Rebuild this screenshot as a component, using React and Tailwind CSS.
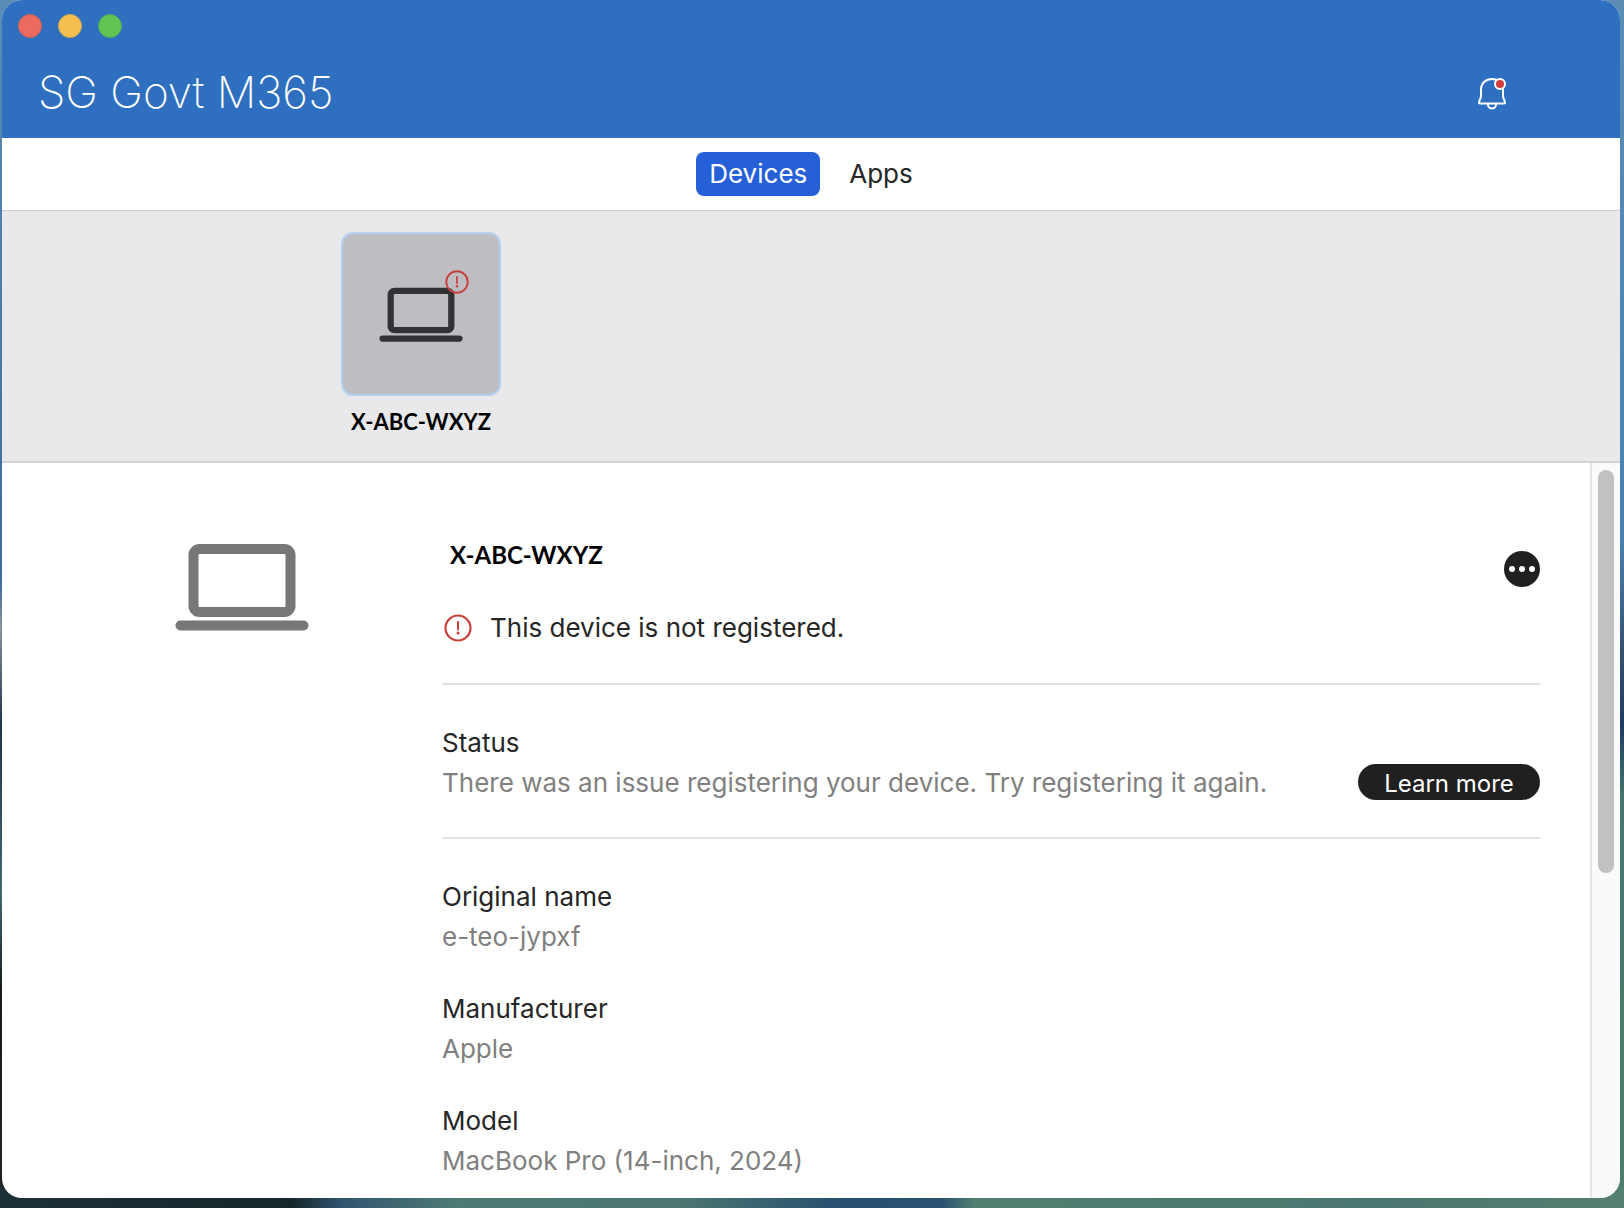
import React from "react";

const device = {
  name: "X-ABC-WXYZ",
  details: [
    { label: "Original name", value: "e-teo-jypxf" },
    { label: "Manufacturer", value: "Apple" },
    { label: "Model", value: "MacBook Pro (14-inch, 2024)" },
  ],
};

const LaptopIcon = ({ className }) => (
  <svg viewBox="0 0 134 88" fill="none" className={className} aria-hidden="true">
    <rect x="18.500" y="6" width="97" height="63" rx="6" stroke="currentColor" strokeWidth="10" />
    <rect x="0.500" y="77.500" width="133" height="10" rx="5" fill="currentColor" />
  </svg>
);

const AlertIcon = ({ className }) => (
  <svg viewBox="0 0 28 28" fill="none" className={className} aria-hidden="true">
    <circle cx="14" cy="14" r="12.500" stroke="currentColor" strokeWidth="2.200" />
    <path d="M14 8V15.500" stroke="currentColor" strokeWidth="2" strokeLinecap="round" />
    <circle cx="14" cy="19" r="1.500" fill="currentColor" />
  </svg>
);

const BellIcon = () => (
  <svg viewBox="0 0 30 34" fill="none" className="w-[30px] h-[34px]" aria-hidden="true">
    <path
      d="M15 2C8.500 2 4 6.500 4 12.500V19C4 21.500 2 23.500 2 25.500Q2 26.500 3 26.500H27Q28 26.500 28 25.500C28 23.500 26 21.500 26 19V12.500C26 6.500 21.500 2 15 2Z"
      stroke="white"
      strokeWidth="2"
      strokeLinejoin="round"
    />
    <path d="M10.800 27C11 29.800 12.800 31.500 15 31.500S19 29.800 19.200 27" stroke="white" strokeWidth="2" />
    <circle cx="23" cy="7" r="5" fill="#d03a3a" stroke="white" strokeWidth="2" />
  </svg>
);

const Header = () => (
  <header className="bg-[#2f6fc0] h-[138px] shrink-0 pt-[14px]">
    <div className="flex gap-4 px-4">
      <button aria-label="Close" className="size-6 rounded-full bg-[#ec6a5e] border border-[#c9635f]" />
      <button aria-label="Minimize" className="size-6 rounded-full bg-[#f4bf4f] border border-[#cfa955]" />
      <button aria-label="Zoom" className="size-6 rounded-full bg-[#61c554] border border-[#4fa962]" />
    </div>
    <div className="flex items-center justify-between pl-9 pr-[113px] pt-6">
      <h1 className="text-white text-[44px] leading-[60px] font-extralight">SG Govt M365</h1>
      <button aria-label="Notifications" className="pt-1">
        <BellIcon />
      </button>
    </div>
  </header>
);

const Tabs = () => (
  <nav className="flex justify-center gap-4 py-[14px] shrink-0 bg-white border-b border-[#cfcfd1] text-[26px] leading-[44px]">
    <button className="px-[13px] rounded-lg bg-[#2560d9] text-white">Devices</button>
    <button className="px-[13px] rounded-lg text-[#262626]">Apps</button>
  </nav>
);

const DeviceStrip = () => (
  <section className="shrink-0 h-[252px] bg-[#e9e9eb] border-b-2 border-[#d3d3d5] pt-[21px] pl-[339px]">
    <button className="flex flex-col items-center w-40">
      <span className="relative flex items-center justify-center w-full h-[164px] rounded-xl bg-[#bebdc2] border-2 border-[#b5d0f2]">
        <LaptopIcon className="w-[84px] h-[55px] text-[#323234]" />
        <AlertIcon className="absolute top-9 right-[30px] size-6 text-[#c9403a]" />
      </span>
      <span className="font-['Lato',sans-serif] font-bold text-[22px] leading-[52px] text-black">{device.name}</span>
    </button>
  </section>
);

const Detail = ({ label, value }) => (
  <div className="leading-10">
    <dt className="text-[#262626]">{label}</dt>
    <dd className="text-[#808080]">{value}</dd>
  </div>
);

const DeviceDetails = () => (
  <main className="flex flex-1 min-w-0 text-[26px] leading-10">
    <div className="w-[440px] shrink-0 pt-20">
      <LaptopIcon className="w-[134px] h-[88px] ml-[173px] text-[#777777]" />
    </div>
    <div className="flex-1 min-w-0 pr-[50px] pt-[72px]">
      <div className="flex items-start justify-between pb-[33px]">
        <h2 className="pl-2 font-['Lato',sans-serif] font-bold text-2xl leading-10 text-black">{device.name}</h2>
        <button aria-label="More options" className="mt-4 -mb-3 size-9 rounded-full bg-[#202020] flex items-center justify-center gap-1">
          <span className="size-[6px] rounded-full bg-white" />
          <span className="size-[6px] rounded-full bg-white" />
          <span className="size-[6px] rounded-full bg-white" />
        </button>
      </div>
      <div className="flex items-center gap-[18px] pb-[35px] text-[#262626] border-b-2 border-[#e2e2e2]">
        <AlertIcon className="size-7 ml-[2px] text-[#c9403a]" />
        <p>This device is not registered.</p>
      </div>
      <div className="flex items-end justify-between pt-[38px] pb-[34px] border-b-2 border-[#e2e2e2]">
        <div>
          <h3 className="text-[#262626]">Status</h3>
          <p className="text-[#808080]">There was an issue registering your device. Try registering it again.</p>
        </div>
        <button className="mb-[3px] h-9 w-[182px] pt-[2px] rounded-full bg-[#202020] text-white text-2xl leading-9">Learn more</button>
      </div>
      <dl className="flex flex-col gap-8 pt-[38px]">
        {device.details.map((item) => (
          <Detail key={item.label} label={item.label} value={item.value} />
        ))}
      </dl>
    </div>
  </main>
);

const Scrollbar = () => (
  <div className="w-[30px] shrink-0 bg-[#fafafa] border-l-2 border-[#e4e4e4] px-[6px] pt-[7px]">
    <div className="h-[403px] rounded-full bg-[#c1c1c1]" />
  </div>
);

// desktop wallpaper: one strip under the window, one on each side
const App = () => {
  return (
    <div className="h-screen flex flex-col pl-[2px] pr-1 pb-[10px] [background:linear-gradient(to_right,#1c3136,#16262b_18%,#2f5570_21%,#4e7a74_28%,#4a7570_42%,#264f70_52%,#2a5270_58%,#517f70_60%,#4a7670_85%,#557f70)_bottom/100%_20px_no-repeat,linear-gradient(#5b8db4,#4a7fb0_45%,#34506c_54%,#1c3c62_60%,#46756c_66%,#4f7d70)_right/50%_100%_no-repeat,linear-gradient(#5b8db4,#3c6b9c_48%,#8a9299_52%,#1f3350_60%,#3f6a70_74%,#16191c_82%,#202628)] font-['Inter',sans-serif]">
      <div className="flex flex-col flex-1 min-h-0 overflow-hidden rounded-[20px] bg-white">
        <Header />
        <Tabs />
        <DeviceStrip />
        <div className="flex flex-1 min-h-0">
          <DeviceDetails />
          <Scrollbar />
        </div>
      </div>
    </div>
  );
};

export default App;
